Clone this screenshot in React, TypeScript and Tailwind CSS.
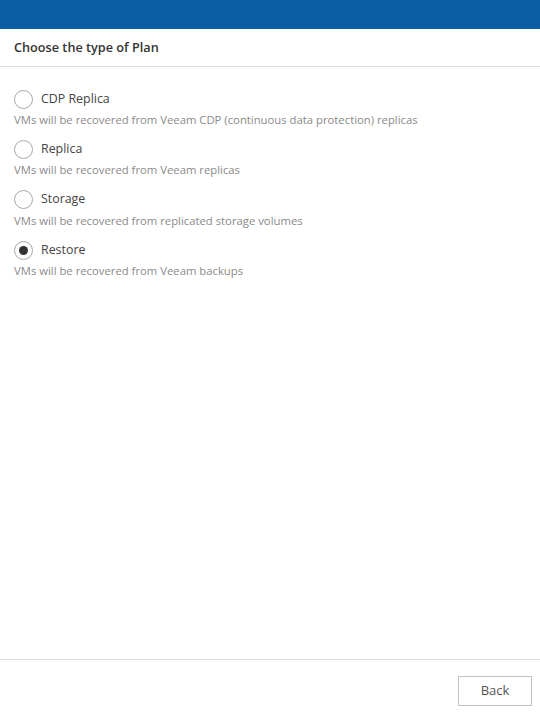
const options = [
  { label: "CDP Replica", desc: "VMs will be recovered from Veeam CDP (continuous data protection) replicas" },
  { label: "Replica", desc: "VMs will be recovered from Veeam replicas" },
  { label: "Storage", desc: "VMs will be recovered from replicated storage volumes" },
  { label: "Restore", desc: "VMs will be recovered from Veeam backups" },
];

const App = () => {
  const selected = "Restore";

  return (
    <div className="flex h-[720px] w-[540px] flex-col bg-white font-['Open_Sans',sans-serif]">
      <div className="h-[29px] bg-[#0b5ea3]" />
      <div className="flex h-[38px] items-center border-b border-[#dcdcdc] px-[14px]">
        <h1 className="text-[12.7px] font-semibold text-[#333]">Choose the type of Plan</h1>
      </div>
      <div className="flex-1 px-[14px] pt-[22px]">
        <div className="flex flex-col gap-[10.4px]">
          {options.map((opt) => (
            <label key={opt.label} className="flex flex-col">
              <div className="flex h-[20px] items-center gap-[8px]">
                <span className="flex h-[19px] w-[19px] items-center justify-center rounded-full border-[1.5px] border-[#a8a8a8] bg-white">
                  {selected === opt.label && <span className="h-[9px] w-[9px] rounded-full bg-[#333]" />}
                </span>
                <span className="text-[12.4px] text-[#444]">{opt.label}</span>
              </div>
              <p className="mt-[2px] text-[11.3px] leading-[18px] text-[#8a8a8a]">{opt.desc}</p>
            </label>
          ))}
        </div>
      </div>
      <div className="flex h-[61px] items-start justify-end border-t border-[#dcdcdc] px-[8px] pt-[16px]">
        <button className="h-[30px] w-[74px] border border-[#b9c4cc] bg-white text-[13px] text-[#555]">
          Back
        </button>
      </div>
    </div>
  );
};

export default App;
